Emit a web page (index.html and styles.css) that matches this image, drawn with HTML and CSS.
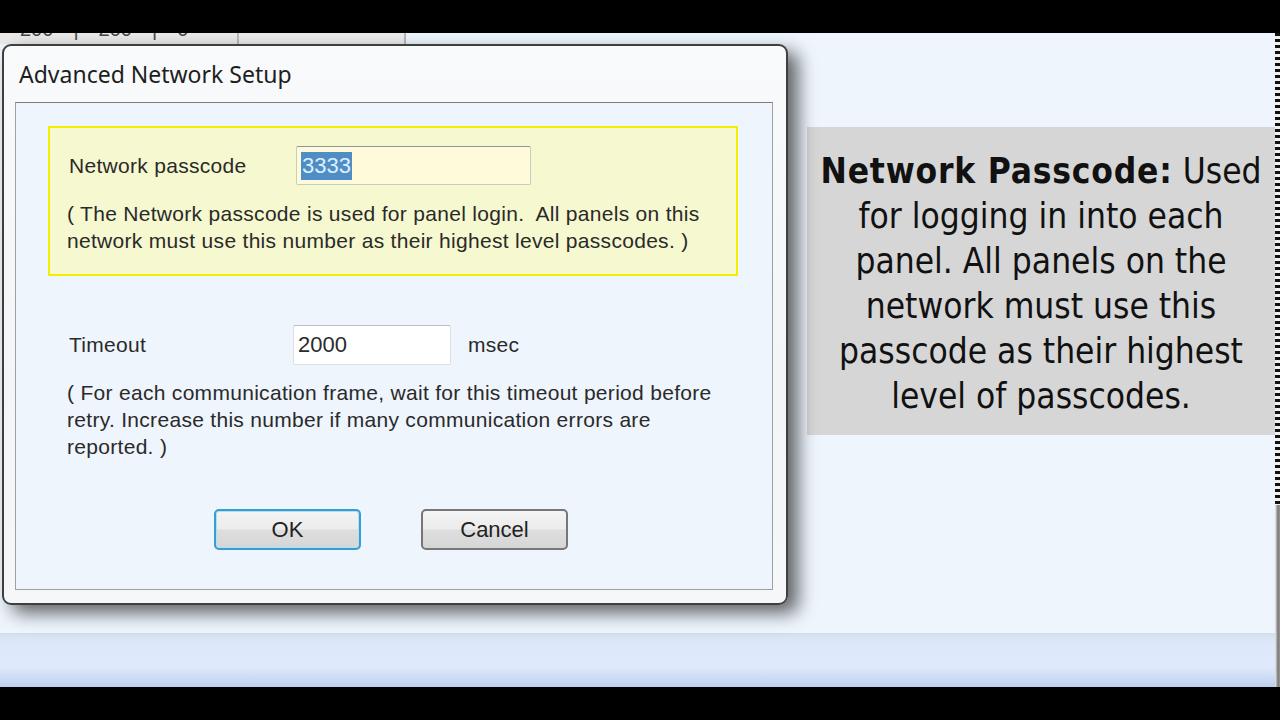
FILE: index.html
```html
<!DOCTYPE html>
<html lang="en">
<head>
<meta charset="utf-8">
<title>Advanced Network Setup</title>
<link rel="stylesheet" href="styles.css">
</head>
<body>
<div class="screen">
  <div class="letterbox"></div>
  <div class="app">
    <div class="main">
      <div class="toolbar">
        <div class="cell cell-values"><span>200</span><span>|</span><span>200</span><span>|</span><span>0</span></div>
        <div class="cell cell-mid"></div>
        <div class="cell cell-rest"></div>
      </div>
      <div class="workspace">
        <div class="dialog">
          <div class="dialog-title">Advanced Network Setup</div>
          <div class="dialog-panel">
            <div class="highlight-box">
              <div class="field-row">
                <span class="field-label label-passcode">Network passcode</span>
                <div class="textbox textbox-yellow"><span class="selected">3333</span></div>
              </div>
              <p class="note note-passcode">( The Network passcode is used for panel login.&nbsp; All panels on this<br>network must use this number as their highest level passcodes. )</p>
            </div>
            <div class="timeout-section">
              <div class="field-row">
                <span class="field-label label-timeout">Timeout</span>
                <div class="textbox textbox-white">2000</div>
                <span class="unit">msec</span>
              </div>
              <p class="note note-timeout">( For each communication frame, wait for this timeout period before<br>retry. Increase this number if many communication errors are<br>reported. )</p>
            </div>
            <div class="button-row">
              <button class="btn btn-default">OK</button>
              <button class="btn">Cancel</button>
            </div>
          </div>
        </div>
        <div class="callout">
          <p><strong>Network Passcode:</strong> Used<br>for logging in into each<br>panel. All panels on the<br>network must use this<br>passcode as their highest<br>level of passcodes.</p>
        </div>
      </div>
      <div class="statusbar"></div>
    </div>
    <div class="ruler"></div>
  </div>
  <div class="letterbox"></div>
</div>
</body>
</html>
```
FILE: styles.css
```css
* { box-sizing: border-box; }

html, body {
  margin: 0;
  padding: 0;
  background: #000;
}

.screen {
  width: 1280px;
  height: 720px;
  display: flex;
  flex-direction: column;
  overflow: hidden;
}

.letterbox {
  height: 33px;
  background: #000;
  flex: none;
}

.app {
  height: 654px;
  display: flex;
  background: #eef5fd;
}

.main {
  width: 1275px;
  display: flex;
  flex-direction: column;
}

.ruler {
  width: 5px;
  background:
    repeating-linear-gradient(to bottom, #111 0 3px, #f2f2f2 3px 6px) top / 5px 472px no-repeat,
    linear-gradient(to right, #eee, #777 60%, #999);
}

/* top toolbar strip, mostly hidden behind the dialog */
.toolbar {
  height: 11px;
  display: flex;
  overflow: hidden;
  flex: none;
}

.cell {
  height: 11px;
  border-right: 2px solid #b8b8b8;
}

.cell-values {
  width: 239px;
  background: #e9e9e9;
  display: flex;
  gap: 20px;
  padding-left: 20px;
  font-family: "Liberation Sans", Arial, sans-serif;
  font-size: 20px;
  line-height: 20px;
  color: #444;
}

.cell-values span {
  margin-top: -14px;
}

.cell-mid {
  width: 167px;
  background: #ececec;
}

.cell-rest {
  flex: 1;
  border-right: none;
  background: #eef5fd;
}

.workspace {
  height: 589px;
  display: flex;
  align-items: flex-start;
  padding-left: 2px;
}

/* dialog window */
.dialog {
  width: 786px;
  height: 561px;
  border: 2px solid #3f3f3f;
  border-radius: 9px;
  background: linear-gradient(to bottom, #f9fafb, #f3f5f8 60%, #f6f7f9);
  box-shadow: 10px 8px 18px rgba(0, 0, 0, 0.6);
  padding: 0 13px 13px 11px;
  display: flex;
  flex-direction: column;
  position: relative;
  z-index: 1;
}

.dialog-title {
  height: 56px;
  display: flex;
  align-items: center;
  padding-left: 4px;
  font-family: "Noto Sans", "Open Sans", sans-serif;
  font-size: 23px;
  color: #1e1e1e;
}

.dialog-panel {
  flex: 1;
  border: 1px solid #a0a0a0;
  border-top-color: #7d7d7d;
  background: #eef5fd;
  font-family: "Liberation Sans", Arial, sans-serif;
  font-size: 21px;
  color: #2a2a2a;
  letter-spacing: 0.3px;
}

.highlight-box {
  margin: 23px 0 0 32px;
  width: 690px;
  height: 150px;
  border: 2px solid #f2f000;
  background: #f6f8d0;
  padding: 18px 0 0 19px;
}

.field-row {
  display: flex;
  align-items: center;
}

.field-label {
  flex: none;
}

.label-passcode { width: 227px; }
.label-timeout { width: 224px; }

.textbox {
  height: 39px;
  display: flex;
  align-items: center;
  padding-left: 4px;
  border: 1px solid #c9ccc0;
  border-top-color: #8e969c;
  border-radius: 2px;
}

.textbox-yellow {
  width: 235px;
  background: #fffad9;
}

.textbox-white {
  width: 158px;
  height: 40px;
  background: #ffffff;
  border-color: #dde1e6;
  border-top-color: #b9bfc6;
  font-size: 22px;
  letter-spacing: 0;
}

.selected {
  background: #4f8dc4;
  color: #dcefff;
  padding: 1px 1px;
  font-size: 22px;
  letter-spacing: 0;
  line-height: 26px;
}

.unit {
  margin-left: 17px;
}

.note {
  margin: 0;
  line-height: 27px;
}

.note-passcode {
  margin: 15px 0 0 -2px;
}

.timeout-section {
  margin-top: 49px;
  padding-left: 53px;
}

.note-timeout {
  margin: 14px 0 0 -2px;
}

.button-row {
  margin: 49px 0 0 198px;
  display: flex;
  gap: 60px;
}

.btn {
  width: 147px;
  height: 41px;
  border: 2px solid #777;
  border-radius: 5px;
  background: linear-gradient(to bottom, #f4f4f4 0%, #ececec 48%, #dedede 52%, #d6d6d6 100%);
  font-family: "Liberation Sans", Arial, sans-serif;
  font-size: 22px;
  color: #222;
  padding: 0;
}

.btn-default {
  border-color: #3d9ccf;
  box-shadow: inset 0 0 0 1px #aee0f7;
}

/* explanatory callout */
.callout {
  margin: 83px 0 0 19px;
  width: 468px;
  height: 308px;
  background: #d6d6d6;
  padding-top: 22px;
  text-align: center;
}

.callout p {
  margin: 0;
  font-family: "DejaVu Sans Condensed", "DejaVu Sans", sans-serif;
  font-size: 35px;
  line-height: 45px;
  color: #111;
  white-space: nowrap;
}

.callout strong {
  font-weight: bold;
  letter-spacing: 0.8px;
}

.statusbar {
  height: 54px;
  flex: none;
  background: linear-gradient(to bottom, #d3dcea 0, #d8e3f3 4px, #dde8fb 12px, #dee9fc 34px, #cbdaf3 46px, #bccff0 54px);
}
```
